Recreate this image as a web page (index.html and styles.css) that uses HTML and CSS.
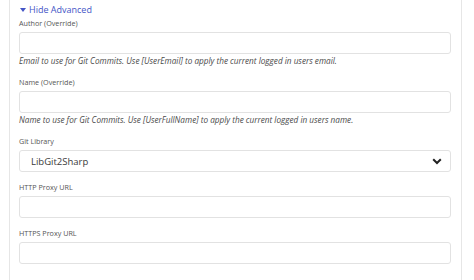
FILE: index.html
```html
<!DOCTYPE html>
<html>
<head>
<meta charset="utf-8">
<link rel="stylesheet" href="styles.css">
</head>
<body>
<div class="panel">
  <div class="toggle"><span class="caret"></span>Hide Advanced</div>
  <div class="field">
    <div class="label">Author (Override)</div>
    <div class="input"></div>
    <div class="help">Email to use for Git Commits. Use [UserEmail] to apply the current logged in users email.</div>
  </div>
  <div class="field">
    <div class="label">Name (Override)</div>
    <div class="input"></div>
    <div class="help">Name to use for Git Commits. Use [UserFullName] to apply the current logged in users name.</div>
  </div>
  <div class="field field-gap">
    <div class="label">Git Library</div>
    <div class="input select">
      <span class="value">LibGit2Sharp</span>
      <svg class="chev" width="10" height="7" viewBox="0 0 10 7"><path d="M1.2 1.2 L5 5 L8.8 1.2" fill="none" stroke="#222" stroke-width="2"/></svg>
    </div>
  </div>
  <div class="field">
    <div class="label">HTTP Proxy URL</div>
    <div class="input"></div>
  </div>
  <div class="field">
    <div class="label">HTTPS Proxy URL</div>
    <div class="input"></div>
  </div>
</div>
</body>
</html>
```
FILE: styles.css
```css
html, body {
  margin: 0;
  padding: 0;
  background: #ffffff;
}
body {
  font-family: "Open Sans", "Noto Sans", sans-serif;
  color: #333;
}
.panel {
  box-sizing: border-box;
  margin-left: 9px;
  width: 453px;
  height: 280px;
  border-left: 1px solid #e6e6e6;
  border-right: 1px solid #e6e6e6;
  padding: 3px 10px 0 9px;
}
.toggle {
  height: 13px;
  line-height: 13px;
  font-size: 9px;
  color: #4455c6;
  display: flex;
  align-items: center;
}
.caret {
  width: 0;
  height: 0;
  border-left: 3px solid transparent;
  border-right: 3px solid transparent;
  border-top: 4px solid #4455c6;
  margin: 0 3px 0 1px;
}
.field {
  margin-top: 1px;
  margin-bottom: 9px;
}
.field-gap {
  margin-top: 2px;
}
.label {
  font-size: 7.2px;
  line-height: 12px;
  height: 12px;
  color: #555;
  margin-bottom: 3px;
}
.input {
  box-sizing: border-box;
  height: 22px;
  border: 1px solid #e2e2e2;
  border-radius: 3px;
  background: #fff;
}
.select {
  display: flex;
  align-items: center;
  justify-content: space-between;
  padding: 0 8px 0 11px;
}
.value {
  font-size: 9.5px;
  color: #3a3a3a;
}
.chev {
  display: block;
}
.help {
  font-size: 8.2px;
  font-style: italic;
  line-height: 12px;
  margin-top: 1px;
  color: #4a4a4a;
}
```
